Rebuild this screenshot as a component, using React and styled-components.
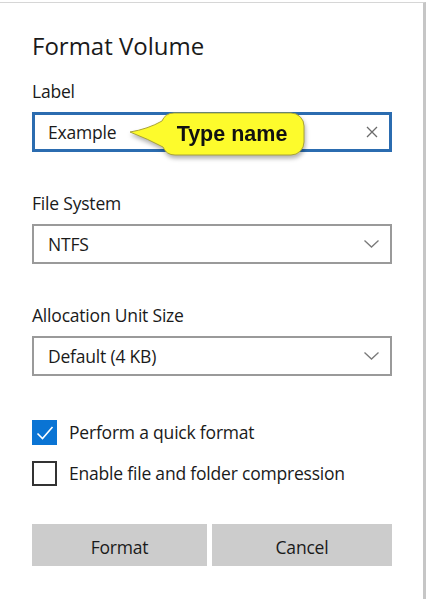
import * as React from 'react';
import styled, { createGlobalStyle } from 'styled-components';

const GlobalStyle = createGlobalStyle`
  html, body {
    margin: 0;
    padding: 0;
    background: #ffffff;
  }
  body {
    font-family: "Open Sans", "Noto Sans", Arial, sans-serif;
    color: #1a1a1a;
  }
`;

function ClearIcon() {
  return (
    <svg width="12" height="12" viewBox="0 0 12 12">
      <path d="M1 1 L11 11 M11 1 L1 11" stroke="#6b6b6b" strokeWidth="1.3" fill="none" />
    </svg>
  );
}

function Chevron() {
  return (
    <svg width="15" height="8" viewBox="0 0 15 8">
      <path d="M0.5 0.5 L7.5 7 L14.5 0.5" stroke="#7a7a7a" strokeWidth="1.3" fill="none" />
    </svg>
  );
}

function CheckMark() {
  return (
    <svg width="24" height="24" viewBox="0 0 24 24">
      <path d="M4.5 12.5 L9.5 17.5 L19.5 6" stroke="#ffffff" strokeWidth="1.6" fill="none" />
    </svg>
  );
}

function Callout({ children }) {
  return (
    <CalloutWrap>
      <svg width="184" height="52" viewBox="0 0 184 52">
        <path
          d="M46 2 H163 A13 13 0 0 1 176 15 V31 A13 13 0 0 1 163 44 H47 A13 13 0 0 1 35 36 Q20 28 2 21 Q20 18 34 10 A13 13 0 0 1 46 2 Z"
          fill="#fdfb2c"
          stroke="#a9a336"
          strokeWidth="1"
        />
      </svg>
      <CalloutText>{children}</CalloutText>
    </CalloutWrap>
  );
}

function App() {
  return (
    <>
      <GlobalStyle />
      <Frame>
        <Title>Format Volume</Title>

        <Field $top={17}>
          <FieldLabel>Label</FieldLabel>
          <TextBox>
            <Value>Example</Value>
            <ClearIcon />
            <Callout>Type name</Callout>
          </TextBox>
        </Field>

        <Field $top={39}>
          <FieldLabel>File System</FieldLabel>
          <Select>
            <Value>NTFS</Value>
            <Chevron />
          </Select>
        </Field>

        <Field $top={39}>
          <FieldLabel>Allocation Unit Size</FieldLabel>
          <Select>
            <Value>Default (4 KB)</Value>
            <Chevron />
          </Select>
        </Field>

        <Options>
          <CheckRow>
            <Box $checked>
              <CheckMark />
            </Box>
            <CheckText>Perform a quick format</CheckText>
          </CheckRow>
          <CheckRow>
            <Box />
            <CheckText>Enable file and folder compression</CheckText>
          </CheckRow>
        </Options>

        <Buttons>
          <Button>Format</Button>
          <Button>Cancel</Button>
        </Buttons>
      </Frame>
    </>
  );
}

const Frame = styled.div`
  box-sizing: border-box;
  width: 426px;
  height: 597px;
  margin-top: 2px;
  border-top: 1px solid #d6d6d6;
  border-right: 3px solid #c6c6c6;
  padding-left: 32px;
  display: flex;
  flex-direction: column;
  overflow: hidden;
`;

const Title = styled.h1`
  margin: 27px 0 0;
  font-size: 24px;
  line-height: 32px;
  font-weight: 400;
  color: #1a1a1a;
`;

const Field = styled.div`
  margin-top: ${(p) => p.$top}px;
  width: 360px;
  display: flex;
  flex-direction: column;
  gap: 9px;
`;

const FieldLabel = styled.div`
  font-size: 17.5px;
  letter-spacing: -0.2px;
  line-height: 24px;
  color: #1a1a1a;
`;

const TextBox = styled.div`
  position: relative;
  box-sizing: border-box;
  height: 40px;
  border: 3px solid #2b6cb0;
  padding: 0 11px 0 13px;
  display: flex;
  align-items: center;
  justify-content: space-between;
`;

const Select = styled.div`
  box-sizing: border-box;
  height: 40px;
  border: 2px solid #9a9a9a;
  padding: 0 11px 0 14px;
  display: flex;
  align-items: center;
  justify-content: space-between;
`;

const Value = styled.span`
  font-size: 17.5px;
  letter-spacing: -0.2px;
  line-height: 24px;
  color: #1a1a1a;
`;

const CalloutWrap = styled.div`
  position: absolute;
  left: 93px;
  top: -4px;
  width: 184px;
  height: 52px;
  filter: drop-shadow(1px 3px 2px rgba(0, 0, 0, 0.3));
  svg {
    position: absolute;
    left: 0;
    top: 0;
  }
`;

const CalloutText = styled.span`
  position: absolute;
  left: 32px;
  top: 2px;
  width: 144px;
  height: 42px;
  display: flex;
  align-items: center;
  justify-content: center;
  font-family: "Liberation Sans", Arial, sans-serif;
  font-weight: 700;
  font-size: 21.5px;
  color: #111111;
`;

const Options = styled.div`
  margin-top: 44px;
  display: flex;
  flex-direction: column;
  gap: 16px;
`;

const CheckRow = styled.div`
  display: flex;
  align-items: center;
  gap: 12px;
  height: 25px;
`;

const Box = styled.div`
  box-sizing: border-box;
  width: 25px;
  height: 25px;
  display: flex;
  align-items: center;
  justify-content: center;
  background: ${(p) => (p.$checked ? '#0a74d4' : '#ffffff')};
  border: ${(p) => (p.$checked ? 'none' : '2px solid #333333')};
`;

const CheckText = styled.span`
  font-size: 17.5px;
  letter-spacing: -0.2px;
  line-height: 25px;
  color: #1a1a1a;
`;

const Buttons = styled.div`
  margin-top: 38px;
  width: 360px;
  display: grid;
  grid-template-columns: 175px 180px;
  gap: 5px;
`;

const Button = styled.button`
  height: 42px;
  border: none;
  background: #cccccc;
  font-family: inherit;
  font-size: 17.5px;
  letter-spacing: -0.2px;
  color: #1a1a1a;
  padding: 4px 0 0;
`;

export default App;
